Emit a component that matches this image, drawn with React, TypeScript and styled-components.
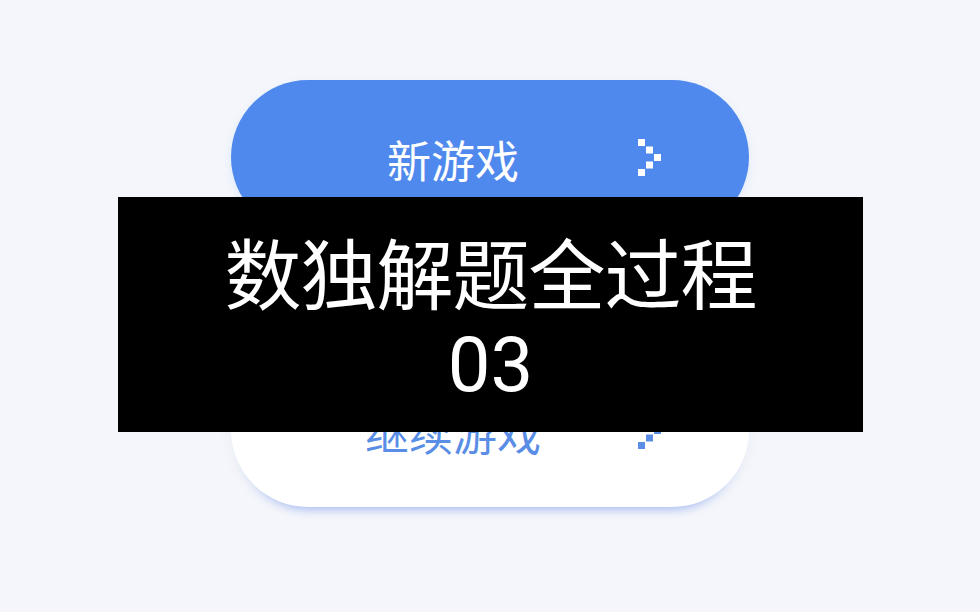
import React from 'react'
import styled, { createGlobalStyle } from 'styled-components'

const GlobalStyle = createGlobalStyle`
    html, body {
        margin: 0;
        padding: 0;
        background: #f4f6fb;
        font-family: "Noto Sans CJK SC", "Noto Sans", sans-serif;
    }
`
const Page = styled.div`
    position: relative;
    width: 980px;
    height: 612px;
    overflow: hidden;
    display: flex;
    flex-direction: column;
    align-items: center;
    padding-top: 80px;
    box-sizing: border-box;
    gap: 119px;
`
const MenuButton = styled.div<{ primary?: boolean }>`
    width: 518px;
    height: 154px;
    border-radius: 80px;
    box-sizing: border-box;
    padding: 0 88px;
    display: flex;
    align-items: center;
    background: ${p => (p.primary ? '#4f89ee' : '#ffffff')};
    color: ${p => (p.primary ? '#ffffff' : '#5a8de6')};
    box-shadow: ${p =>
        p.primary
            ? '0 4px 10px rgba(79, 137, 238, 0.12)'
            : '0 14px 10px -12px rgba(90, 130, 240, 0.5), 0 0 16px rgba(40, 60, 120, 0.05)'};
`
const Label = styled.span`
    flex: 1;
    text-align: center;
    font-size: 44px;
    line-height: 1;
    padding-top: 4px;
`
const Chevron = styled.svg`
    width: 23px;
    height: 37px;
    margin-left: 51px;
    flex-shrink: 0;
`
const Overlay = styled.div`
    position: absolute;
    left: 118px;
    top: 197px;
    width: 745px;
    height: 235px;
    background: #000;
    color: #fff;
    display: flex;
    flex-direction: column;
    align-items: center;
    justify-content: center;
    padding-top: 6px;
    box-sizing: border-box;
`
const TitleLine = styled.div`
    font-size: 77px;
    line-height: 94px;
    font-weight: 400;
    letter-spacing: -1px;
`
const Number = styled.div`
    font-family: Roboto, "Noto Sans", sans-serif;
    font-size: 76px;
    line-height: 94px;
`

function PixelArrow({ color }: { color: string }) {
  const cells = [[0, 0], [1, 1], [2, 2], [1, 3], [0, 4]]
  return (
    <Chevron viewBox="0 0 23 37">
      {cells.map(([cx, cy], i) => (
        <rect key={i} x={cx * 8} y={cy * 7.5} width={7} height={7} fill={color} />
      ))}
    </Chevron>
  )
}

export default function App() {
  return (
    <>
      <GlobalStyle />
      <Page>
        <MenuButton primary>
          <Label>新游戏</Label>
          <PixelArrow color="#ffffff" />
        </MenuButton>
        <MenuButton>
          <Label>继续游戏</Label>
          <PixelArrow color="#5a8de6" />
        </MenuButton>
        <Overlay>
          <TitleLine>数独解题全过程</TitleLine>
          <Number>03</Number>
        </Overlay>
      </Page>
    </>
  )
}
